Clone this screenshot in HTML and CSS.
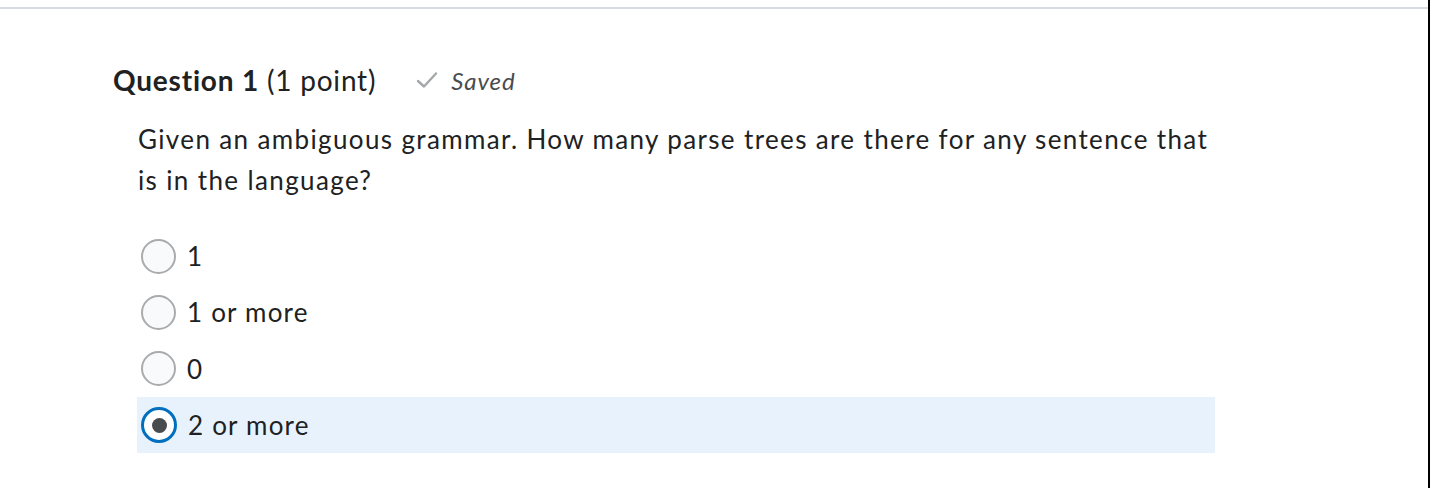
FILE: index.html
```html
<!DOCTYPE html>
<html lang="en">
<head>
<meta charset="utf-8">
<title>Question 1</title>
<link rel="stylesheet" href="styles.css">
</head>
<body>
<div class="page">
  <div class="topline"></div>
  <div class="question">
    <div class="qhead">
      <h2 class="qtitle"><strong>Question 1</strong> (1 point)</h2>
      <span class="saved">
        <svg class="check" width="22" height="18" viewBox="0 0 22 18" aria-hidden="true">
          <path d="M2 10 L8 15.5 L20 2.5" fill="none" stroke="#a4a8ab" stroke-width="2.4" stroke-linecap="round" stroke-linejoin="round"/>
        </svg>
        <em>Saved</em>
      </span>
    </div>
    <p class="qtext">Given an ambiguous grammar. How many parse trees are there for any sentence that is in the language?</p>
    <div class="options">
      <label class="option"><span class="radio"></span><span class="otext">1</span></label>
      <label class="option"><span class="radio"></span><span class="otext">1 or more</span></label>
      <label class="option"><span class="radio"></span><span class="otext">0</span></label>
      <label class="option selected"><span class="radio checked"></span><span class="otext">2 or more</span></label>
    </div>
  </div>
</div>
</body>
</html>
```

FILE: styles.css
```css
html, body {
  margin: 0;
  padding: 0;
  background: #ffffff;
}

body {
  font-family: Lato, "Noto Sans", sans-serif;
  color: #202122;
}

.page {
  height: 488px;
  box-sizing: border-box;
  border-right: 2px solid #000000;
  overflow: hidden;
}

.topline {
  margin-top: 7px;
  height: 2px;
  background: #d7dce3;
}

.question {
  padding-left: 113px;
  padding-top: 53px;
}

.qhead {
  display: flex;
  align-items: center;
  height: 36px;
}

.qtitle {
  margin: 0;
  font-size: 28px;
  font-weight: 400;
  line-height: 36px;
  letter-spacing: 0.8px;
  color: #202122;
}

.qtitle strong {
  font-weight: 700;
}

.saved {
  display: flex;
  align-items: center;
  margin-left: 40px;
  color: #494c4e;
  font-size: 24px;
  letter-spacing: 0.9px;
}

.saved em {
  margin-left: 13px;
}

.check {
  display: block;
}

.qtext {
  margin: 21px 0 0 25px;
  width: 1078px;
  font-size: 26px;
  line-height: 41px;
  letter-spacing: 1.37px;
}

.options {
  margin: 27px 0 0 24px;
  width: 1078px;
  display: flex;
  flex-direction: column;
}

.option {
  display: flex;
  align-items: center;
  height: 56.33px;
  padding-left: 4px;
  font-size: 26px;
  letter-spacing: 1.2px;
}

.option.selected {
  background: #e8f2fc;
}

.radio {
  width: 31px;
  height: 31px;
  border: 2px solid #a9acaf;
  border-radius: 50%;
  background: #f9fafb;
  flex: none;
  box-sizing: content-box;
  position: relative;
}

.radio.checked {
  width: 30px;
  height: 30px;
  border: 3px solid #006fbf;
  background: #ffffff;
}

.radio.checked::after {
  content: "";
  position: absolute;
  left: 7.5px;
  top: 7.5px;
  width: 15px;
  height: 15px;
  border-radius: 50%;
  background: #494c4e;
}

.otext {
  margin-left: 11px;
}
```
